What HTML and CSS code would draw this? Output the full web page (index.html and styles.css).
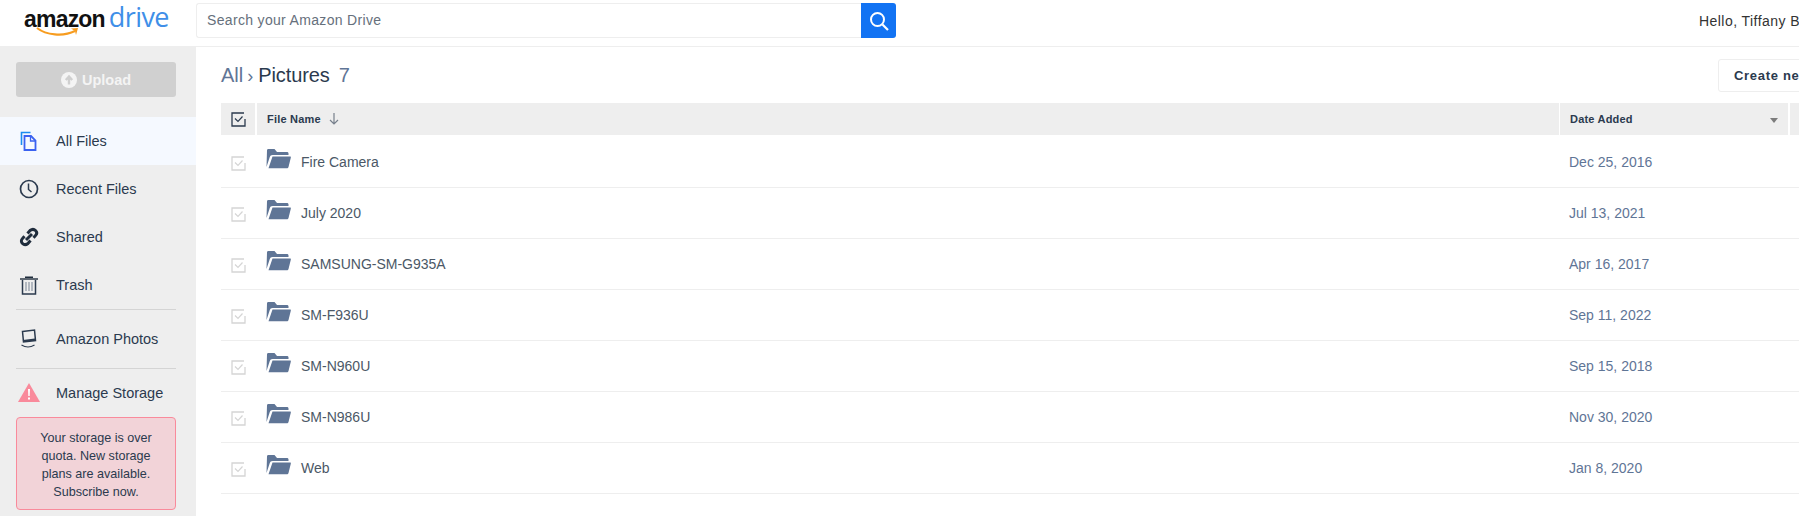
FILE: index.html
```html
<!DOCTYPE html>
<html lang="en">
<head>
  <meta charset="UTF-8">
  <title>Amazon Drive</title>
  <link rel="stylesheet" href="styles.css">
</head>
<body>
  <div class="page">
    <header class="topbar">
      <div class="logo">
        <span class="logo-amazon">amazon</span><span class="logo-drive">drive</span>
        <svg class="logo-smile" viewBox="0 0 44 11"><path d="M1 1c9 7 26 9 38 3" fill="none" stroke="#f79c1f" stroke-width="2.2"/><path d="M35 1.5l7-.5-2 7-1-4z" fill="#f79c1f"/></svg>
      </div>
      <form class="search">
        <div class="search-input">Search your Amazon Drive</div>
        <button class="search-btn" type="button">
          <svg viewBox="0 0 22 22" width="22" height="22"><circle cx="9.5" cy="9.5" r="6.5" fill="none" stroke="#fff" stroke-width="2"/><path d="M14.5 14.5l5.5 5.5" stroke="#fff" stroke-width="2.2"/></svg>
        </button>
      </form>
      <div class="hello">Hello, Tiffany B</div>
    </header>
    <div class="body-row">
      <aside class="sidebar">
        <div class="upload-wrap">
          <button class="upload" type="button">
            <svg viewBox="0 0 16 16" width="16" height="16"><circle cx="8" cy="8" r="8" fill="#f4f4f4"/><path d="M8 12.5V5M4.8 8L8 4.6 11.2 8" fill="none" stroke="#cfcfcf" stroke-width="2.4"/></svg>
            Upload
          </button>
        </div>
        <nav>
          <a class="nav-item active">
            <svg class="nav-icon" viewBox="0 0 20 20"><path d="M2.500 14V1.500h9" fill="none" stroke="#1a8cf0" stroke-width="1.600"/><path d="M5.500 5h6.500l4.500 4.500V19h-11z" fill="none" stroke="#3a62f0" stroke-width="1.800"/><path d="M11.500 5v5H16.500" fill="none" stroke="#3a62f0" stroke-width="1.300"/></svg>
            All Files
          </a>
          <a class="nav-item">
            <svg class="nav-icon" viewBox="0 0 20 20"><circle cx="10" cy="10" r="8.500" fill="none" stroke="#2b3a4e" stroke-width="1.700"/><path d="M9.500 4.500v6l3 2.500" fill="none" stroke="#2b3a4e" stroke-width="1.500"/></svg>
            Recent Files
          </a>
          <a class="nav-item">
            <svg class="nav-icon" viewBox="0 0 20 20"><path d="M8.500 6.500l2.500-3c2-1.500 4-1.500 5.500 0s1.500 3.500 0 5l-2 2.200M11.500 13.500l-2.500 3c-2 1.500-4 1.500-5.500 0s-1.500-3.500 0-5l2-2.200M7 13l6-6" fill="none" stroke="#1f2c3c" stroke-width="3"/></svg>
            Shared
          </a>
          <a class="nav-item">
            <svg class="nav-icon" viewBox="0 0 20 20"><path d="M1 4h18" stroke="#1f2c3c" stroke-width="1.400"/><path d="M6 3V1.500h8V3z" fill="#1f2c3c"/><path d="M3.500 5v14h13V5" fill="none" stroke="#2b3a4e" stroke-width="1.500"/><path d="M7 7v9M10 7v9M13 7v9" stroke="#8b95a3" stroke-width="1.200"/></svg>
            Trash
          </a>
          <div class="nav-sep"></div>
          <a class="nav-item nav-photos">
            <svg class="nav-icon" viewBox="0 0 20 20"><path d="M3.500 2.500l12-1.500 1 10.500-12 1.500z" fill="none" stroke="#2b3a4e" stroke-width="1.500"/><path d="M4 12l12-1.500" stroke="#2b3a4e" stroke-width="2"/><path d="M2.500 16c4 2.500 9 2.500 13 0" fill="none" stroke="#2b3a4e" stroke-width="1.100"/></svg>
            Amazon Photos
          </a>
          <div class="nav-sep"></div>
          <a class="nav-item nav-storage">
            <svg class="nav-icon warn" viewBox="0 0 22 20"><path d="M11 0l11 19H0z" fill="#f98a9b"/><path d="M10 6h2l-.3 7h-1.400zM10 14.500h2v2h-2z" fill="#fff"/></svg>
            Manage Storage
          </a>
        </nav>
        <div class="quota">Your storage is over quota. New storage plans are available. Subscribe now.</div>
      </aside>
      <main class="content">
        <div class="toolbar">
          <div class="crumbs"><span class="crumb-all">All</span><span class="crumb-sep">›</span><span class="crumb-cur">Pictures</span><span class="crumb-count">7</span></div>
          <button class="create" type="button">Create new</button>
        </div>
        <div class="table">
          <div class="thead">
            <div class="th th-check">
              <svg class="check" viewBox="0 0 15 15"><path d="M13 1H1v13h13V7" fill="none" stroke="#2b3a4e" stroke-width="1.300"/><path d="M4 6.500l3 3 4.500-5" fill="none" stroke="#2b3a4e" stroke-width="1.200"/></svg>
            </div>
            <div class="th th-name">File Name
              <svg class="sort" viewBox="0 0 10 12" width="10" height="12"><path d="M5 0v11M1 7l4 4 4-4" fill="none" stroke="#77808c" stroke-width="1.200"/></svg>
            </div>
            <div class="th th-date">Date Added<span class="caret"></span></div>
            <div class="th th-more"></div>
          </div>
          <div class="row"><span class="cell-check"><svg class="check dim" viewBox="0 0 15 15"><use href="#tick"/></svg></span><span class="cell-name"><svg class="folder" viewBox="0 0 26 20"><use href="#folder"/></svg>Fire Camera</span><span class="cell-date">Dec 25, 2016</span></div>
          <div class="row"><span class="cell-check"><svg class="check dim" viewBox="0 0 15 15"><use href="#tick"/></svg></span><span class="cell-name"><svg class="folder" viewBox="0 0 26 20"><use href="#folder"/></svg>July 2020</span><span class="cell-date">Jul 13, 2021</span></div>
          <div class="row"><span class="cell-check"><svg class="check dim" viewBox="0 0 15 15"><use href="#tick"/></svg></span><span class="cell-name"><svg class="folder" viewBox="0 0 26 20"><use href="#folder"/></svg>SAMSUNG-SM-G935A</span><span class="cell-date">Apr 16, 2017</span></div>
          <div class="row"><span class="cell-check"><svg class="check dim" viewBox="0 0 15 15"><use href="#tick"/></svg></span><span class="cell-name"><svg class="folder" viewBox="0 0 26 20"><use href="#folder"/></svg>SM-F936U</span><span class="cell-date">Sep 11, 2022</span></div>
          <div class="row"><span class="cell-check"><svg class="check dim" viewBox="0 0 15 15"><use href="#tick"/></svg></span><span class="cell-name"><svg class="folder" viewBox="0 0 26 20"><use href="#folder"/></svg>SM-N960U</span><span class="cell-date">Sep 15, 2018</span></div>
          <div class="row"><span class="cell-check"><svg class="check dim" viewBox="0 0 15 15"><use href="#tick"/></svg></span><span class="cell-name"><svg class="folder" viewBox="0 0 26 20"><use href="#folder"/></svg>SM-N986U</span><span class="cell-date">Nov 30, 2020</span></div>
          <div class="row"><span class="cell-check"><svg class="check dim" viewBox="0 0 15 15"><use href="#tick"/></svg></span><span class="cell-name"><svg class="folder" viewBox="0 0 26 20"><use href="#folder"/></svg>Web</span><span class="cell-date">Jan 8, 2020</span></div>
        </div>
      </main>
    </div>
  </div>
  <svg class="defs" width="0" height="0">
    <defs>
      <g id="tick"><path d="M13 1H1v13h13V7" fill="none" stroke="#d5d5d5" stroke-width="1.300"/><path d="M4 6.500l3 3 4.500-5" fill="none" stroke="#d5d5d5" stroke-width="1.200"/></g>
      <g id="folder"><path d="M1.500 18L2 1.500c0-1 .5-1.500 1.500-1.500h6l2.500 3h10c.8 0 1.500.5 1.500 1.500V6H7.500C6 6 5.200 6.800 4.800 8z" fill="#5f7596"/><path d="M7.500 7.500H25c.8 0 1 .5.8 1.300L23.500 18c-.2.8-.8 1.300-1.700 1.300H3.500z" fill="#5f7596"/></g>
    </defs>
  </svg>
</body>
</html>
```
FILE: styles.css
```css
html, body {
  margin: 0;
  padding: 0;
  height: 100%;
  overflow: hidden;
  background: #fff;
}

body {
  font-family: "Liberation Sans", Arial, sans-serif;
  font-size: 14px;
  color: #2b3a4e;
}

.page {
  width: 1900px;
  height: 516px;
  display: flex;
  flex-direction: column;
}

.defs {
  position: absolute;
}

/* top bar */
.topbar {
  height: 46px;
  flex-shrink: 0;
  display: flex;
  align-items: center;
  border-bottom: 1px solid #eee;
}

.logo {
  position: relative;
  width: 196px;
  padding-left: 24px;
  box-sizing: border-box;
  flex-shrink: 0;
  margin-top: -14px;
  white-space: nowrap;
}

.logo-amazon {
  font-size: 23px;
  font-weight: bold;
  letter-spacing: -0.8px;
  color: #111;
}

.logo-drive {
  font-family: "Open Sans", sans-serif;
  font-size: 27px;
  letter-spacing: -0.6px;
  margin-left: 4px;
  color: #3f8fe8;
}

.logo-smile {
  position: absolute;
  left: 36px;
  top: 29px;
  width: 44px;
  height: 11px;
}

.search {
  display: flex;
  align-self: flex-start;
  height: 35px;
  width: 700px;
  margin: 3px 0 0;
}

.search-input {
  flex: 1;
  border: 1px solid #eee;
  border-right: none;
  border-radius: 3px 0 0 3px;
  padding-left: 10px;
  font-size: 14px;
  letter-spacing: 0.33px;
  line-height: 33px;
  color: #66707c;
}

.search-btn {
  width: 35px;
  height: 35px;
  padding: 0;
  border: none;
  border-radius: 0 3px 3px 0;
  background: #1273f3;
  display: flex;
  align-items: center;
  justify-content: center;
}

.hello {
  margin-left: auto;
  margin-right: 101px;
  width: 100px;
  font-size: 14px;
  letter-spacing: 0.45px;
  color: #333;
  white-space: nowrap;
  margin-top: -4px;
}

/* sidebar */
.body-row {
  flex: 1;
  display: flex;
  min-height: 0;
}

.sidebar {
  width: 196px;
  flex-shrink: 0;
  background: #eee;
}

.upload-wrap {
  padding: 15px 16px 0;
  height: 55px;
}

.upload {
  width: 160px;
  height: 35px;
  border: none;
  border-radius: 3px;
  background: #d0d0d0;
  color: #f4f4f4;
  font-family: inherit;
  font-size: 14.5px;
  font-weight: bold;
  display: flex;
  align-items: center;
  justify-content: center;
  gap: 5px;
  padding: 0;
}

.nav-item {
  height: 48px;
  display: flex;
  align-items: center;
  padding-left: 19px;
  font-size: 14.5px;
  color: #2b3a4e;
}

.nav-item.active {
  background: #f5f9ff;
}

.nav-icon {
  width: 20px;
  height: 20px;
  margin-right: 17px;
  flex-shrink: 0;
}

.nav-icon.warn {
  width: 22px;
  margin-left: -1px;
  margin-right: 16px;
}

.nav-sep {
  height: 1px;
  background: #d4d4d4;
  margin: 0 20px 0 16px;
}

.nav-photos {
  height: 58px;
}

.nav-storage {
  height: 48px;
}

.quota {
  margin: 0 20px 0 16px;
  padding: 11px 14px;
  height: 93px;
  box-sizing: border-box;
  background: #f2d3d8;
  border: 1px solid #f98a9b;
  border-radius: 4px;
  text-align: center;
  font-size: 12.6px;
  line-height: 18px;
}

/* main */
.content {
  flex: 1;
  padding-left: 25px;
  min-width: 0;
}

.toolbar {
  height: 56px;
  display: flex;
  align-items: center;
  justify-content: space-between;
}

.crumbs {
  display: flex;
  align-items: baseline;
  font-size: 20px;
}

.crumb-all {
  color: #5f7596;
}

.crumb-sep {
  margin: 0 5px 0 4px;
  color: #5f7596;
  font-size: 18px;
}

.crumb-cur {
  color: #2b3a4e;
  letter-spacing: -0.1px;
}

.crumb-count {
  color: #5f7596;
  margin-left: 9px;
}

.create {
  width: 182px;
  height: 33px;
  background: #fff;
  border: 1px solid #eee;
  border-radius: 3px;
  padding: 0 0 0 15px;
  text-align: left;
  font-family: inherit;
  font-size: 13px;
  font-weight: bold;
  letter-spacing: 0.7px;
  color: #2b3a4e;
}

.thead {
  display: flex;
  height: 32px;
  gap: 1px;
  margin-bottom: 2px;
}

.th {
  background: #eee;
  display: flex;
  align-items: center;
  font-size: 11px;
  font-weight: bold;
  letter-spacing: 0.2px;
}

.th-check {
  width: 34px;
  justify-content: center;
}

.th-name {
  width: 1302px;
  padding-left: 10px;
  box-sizing: border-box;
  margin-left: 1px;
  gap: 8px;
}

.th-date {
  width: 228px;
  padding: 0 10px;
  box-sizing: border-box;
  justify-content: space-between;
}

.th-more {
  flex: 1;
  margin-left: 1px;
}

.caret {
  width: 0;
  height: 0;
  border-left: 4.500px solid transparent;
  border-right: 4.500px solid transparent;
  border-top: 5px solid #7c7c7c;
  margin-top: 2px;
}

.check {
  width: 15px;
  height: 15px;
}

.row {
  display: flex;
  align-items: center;
  height: 51px;
  box-sizing: border-box;
  border-bottom: 1px solid #eee;
  font-size: 14px;
}

.cell-check {
  width: 34px;
  display: flex;
  justify-content: center;
  padding-top: 2px;
}

.cell-name {
  width: 1305px;
  display: flex;
  align-items: center;
  color: #4b5866;
}

.cell-date {
  color: #5f7596;
  padding-left: 9px;
}

.folder {
  width: 26px;
  height: 20px;
  margin: -6px 10px 0 10px;
  flex-shrink: 0;
}
```
